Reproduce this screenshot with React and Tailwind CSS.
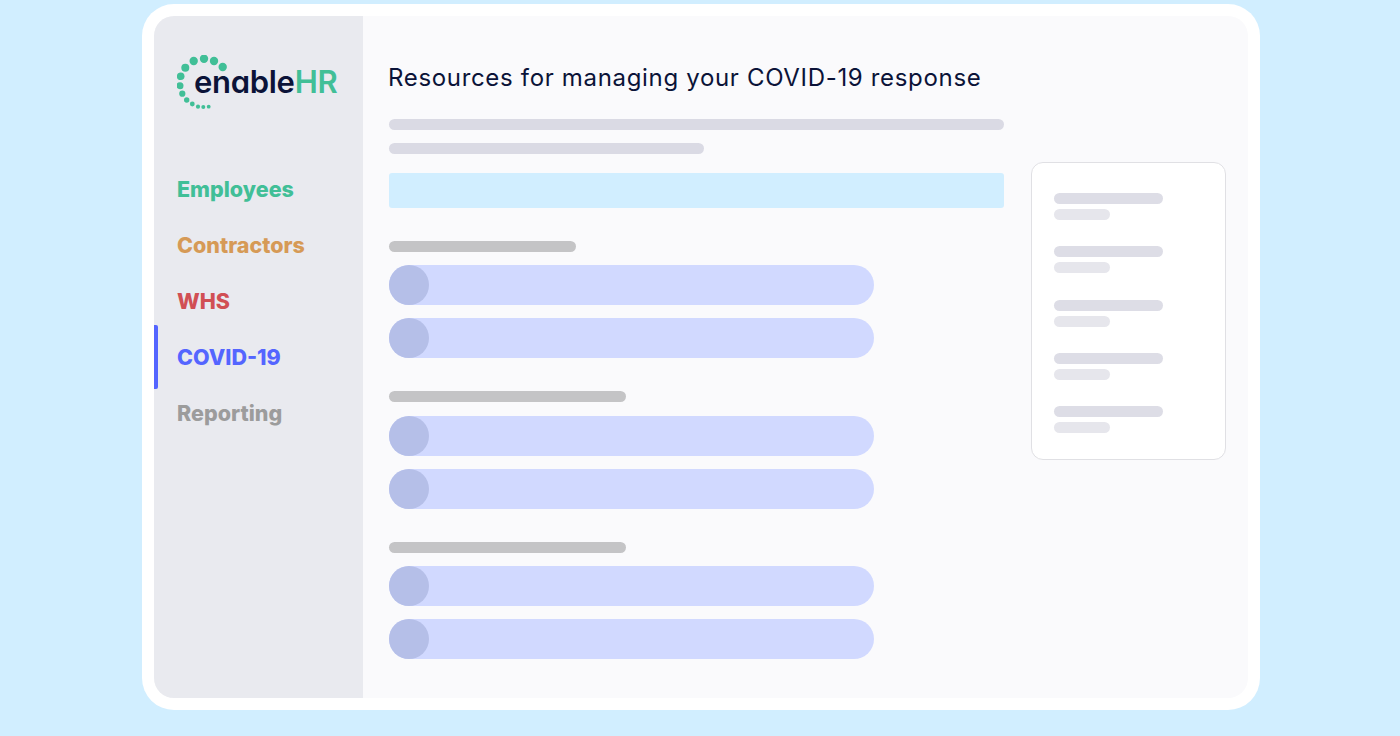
import React from 'react';

const logoDots = [
  [222.7, 67, 4.2], [214, 61, 4.2], [204, 58.7, 4.2], [193.7, 61, 4.2], [185.3, 67.7, 4],
  [180.7, 76.3, 3.8], [180, 85.7, 3.5], [182.3, 93.7, 3.1], [186.7, 100, 2.7],
  [192.3, 104, 2.4], [198, 106.7, 2.1], [203.3, 107, 2], [208.7, 106.7, 1.9],
];

const navItems = [
  { label: 'Employees', color: 'text-[#41bf97]' },
  { label: 'Contractors', color: 'text-[#d69a56]' },
  { label: 'WHS', color: 'text-[#d14f54]' },
  { label: 'COVID-19', color: 'text-[#5465ff]', active: true },
  { label: 'Reporting', color: 'text-[#9c9c9c]' },
];

const sectionWidths = ['w-[187px]', 'w-[237px]', 'w-[237px]'];

const Logo = () => (
  <div className="relative h-[60px] w-[170px] mt-[39px] ml-[23px]">
    <svg className="absolute left-0 top-0" width="60" height="60" viewBox="177 55 60 60">
      {logoDots.map(([cx, cy, r], i) => (
        <circle key={i} cx={cx} cy={cy} r={r} fill="#41bf97" />
      ))}
    </svg>
    <div className="absolute left-[17px] top-[7px] text-[31px] leading-[40px] font-semibold tracking-[-0.3px] text-[#0b1338] whitespace-nowrap [font-feature-settings:'cv11']">
      enable<span className="text-[#41bf97] font-semibold">HR</span>
    </div>
  </div>
);

const Sidebar = () => (
  <div className="w-[209px] shrink-0 bg-[#e9eaef]">
    <Logo />
    <div className="mt-[47px]">
      {navItems.map(item => (
        <div key={item.label} className="relative h-[56px] flex items-center pl-[23px]">
          {item.active && (
            <div className="absolute left-0 top-[-5px] h-[64px] w-[4px] rounded-r-[2px] bg-[#5465ff]" />
          )}
          <span className={`text-[21.5px] font-extrabold leading-none ${item.color}`}>{item.label}</span>
        </div>
      ))}
    </div>
  </div>
);

const Pill = ({ className = '' }) => (
  <div className={`h-[40px] w-[485px] rounded-full bg-[#d1d9ff] ${className}`}>
    <div className="h-[40px] w-[40px] rounded-full bg-[#b5bfe8]" />
  </div>
);

const SidePanel = () => (
  <div className="mt-[146px] ml-[27px] h-[298px] w-[195px] shrink-0 rounded-[12px] border border-[#e0e0e4] bg-white pt-[30px] pl-[22px]">
    {[0, 1, 2, 3, 4].map(i => (
      <div key={i} className="h-[53.25px]">
        <div className="h-[11px] w-[109px] rounded-full bg-[#dddde6]" />
        <div className="mt-[5px] h-[11px] w-[56px] rounded-full bg-[#e6e6ec]" />
      </div>
    ))}
  </div>
);

export default function App() {
  return (
    <div className="h-[736px] w-full overflow-hidden bg-[#d1eeff] pt-[4px] font-['Inter',sans-serif]">
      <div className="ml-[142px] h-[706px] w-[1118px] rounded-[32px] bg-white p-[12px]">
        <div className="flex h-[682px] overflow-hidden rounded-[20px] bg-[#fafafc]">
          <Sidebar />
          <div className="w-[641px] shrink-0 pl-[26px]">
            <h1 className="ml-[-1px] mt-[45px] h-[34px] text-[24px] leading-[34px] font-normal tracking-[0.67px] text-[#0b1338] whitespace-nowrap">
              Resources for managing your COVID-19 response
            </h1>
            <div className="mt-[24px] h-[11px] w-[615px] rounded-full bg-[#dadae4]" />
            <div className="mt-[13px] h-[11px] w-[315px] rounded-full bg-[#dadae4]" />
            <div className="mt-[19px] h-[35px] w-[615px] rounded-[3px] bg-[#d1eeff]" />
            <div className="mt-[-0.1px]">
              {sectionWidths.map((width, i) => (
                <div key={i} className="mt-[33px]">
                  <div className={`h-[11px] rounded-full bg-[#c4c4c6] ${width}`} />
                  <Pill className="mt-[13.25px]" />
                  <Pill className="mt-[13.25px]" />
                </div>
              ))}
            </div>
          </div>
          <SidePanel />
        </div>
      </div>
    </div>
  );
}
